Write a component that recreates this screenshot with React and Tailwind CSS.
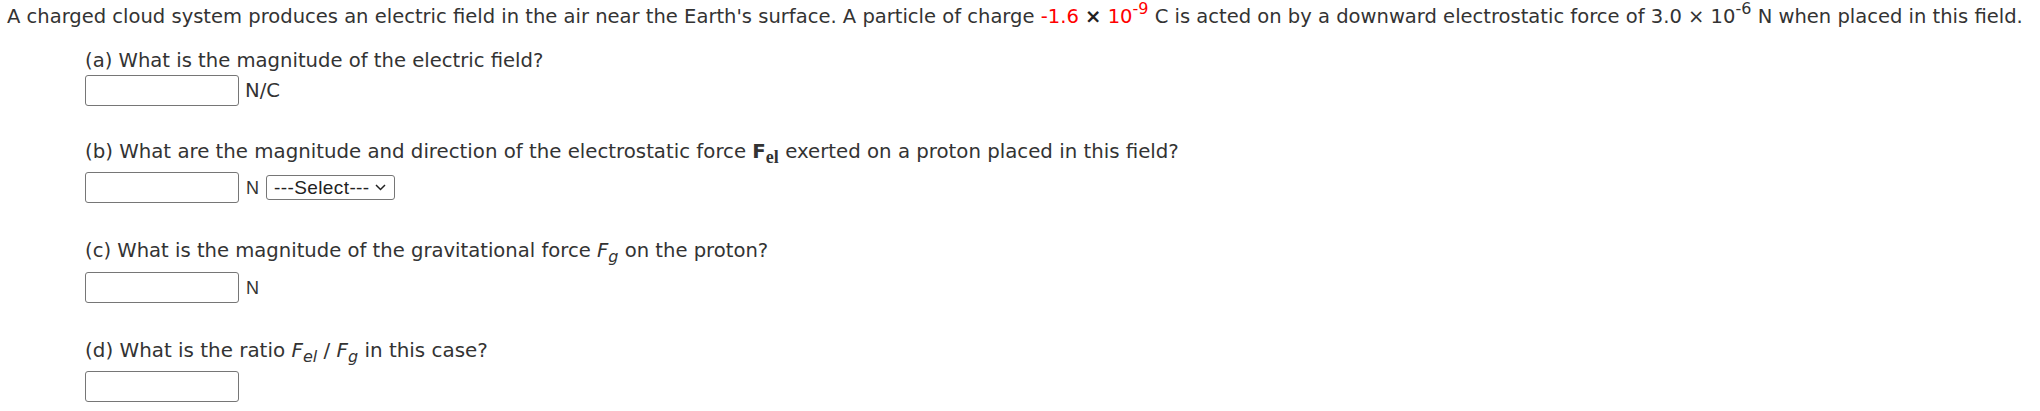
import React from "react";

// small raised / lowered text that does not grow the line box
const Sup = ({ children, className = "" }) => (
  <span className={`relative -top-[9px] text-[16px] leading-none ${className}`}>
    {children}
  </span>
);

const Sub = ({ children, className = "" }) => (
  <span className={`relative top-[5px] text-[16px] leading-none ${className}`}>
    {children}
  </span>
);

const AnswerBox = () => (
  <input
    type="text"
    className="h-[31px] w-[154px] rounded-[3px] border border-[#767676] bg-white px-1 text-[18px] outline-none"
  />
);

const DirectionSelect = () => (
  <div className="relative">
    <select
      defaultValue=""
      className="h-[25px] w-[129px] appearance-none rounded-[3px] border border-[#767676] bg-white pl-[7px] pr-6 font-['Liberation_Sans',Arial,sans-serif] text-[19px] leading-[21px] tracking-[0.4px] text-[#222]"
    >
      <option value="">---Select---</option>
      <option value="up">up</option>
      <option value="down">down</option>
    </select>
    <svg
      className="pointer-events-none absolute right-[9px] top-[9px]"
      width="11"
      height="7"
      viewBox="0 0 11 7"
      fill="none"
    >
      <path d="M1 1l4.5 4.5L10 1" stroke="#222" strokeWidth="1.5" />
    </svg>
  </div>
);

export default function App() {
  return (
    <div className="min-h-[411px] bg-white pl-[7px] pt-[5px] font-['DejaVu_Sans',Verdana,sans-serif] text-[19.6px] leading-[24px] text-[#333]">
      <p className="whitespace-nowrap text-[19.55px]">
        A charged cloud system produces an electric field in the air near the
        Earth's surface. A particle of charge{" "}
        <span className="text-[#ff0000]">-1.6</span>{" "}
        <span className="font-bold text-[#222]">×</span>{" "}
        <span className="text-[#ff0000]">
          10<Sup>-9</Sup>
        </span>{" "}
        C is acted on by a downward electrostatic force of 3.0 × 10
        <Sup>-6</Sup> N when placed in this field.
      </p>

      <div className="flex flex-col pl-[78px]">
        {/* (a) */}
        <p className="mt-[20px]">(a) What is the magnitude of the electric field?</p>
        <div className="mt-[2px] flex items-center gap-[6px]">
          <AnswerBox />
          <span>N/C</span>
        </div>

        {/* (b) */}
        <p className="mt-[34px] text-[19.75px]">
          (b) What are the magnitude and direction of the electrostatic force{" "}
          <span className="font-bold">F</span>
          <Sub className="font-['Liberation_Serif',serif] text-[18px] font-bold">el</Sub>{" "}
          exerted on a proton placed in this field?
        </p>
        <div className="mt-[8px] flex items-center gap-[7px]">
          <AnswerBox />
          <span className="font-['Liberation_Sans',Arial,sans-serif] text-[18px]">N</span>
          <DirectionSelect />
        </div>

        {/* (c) */}
        <p className="mt-[36px]">
          (c) What is the magnitude of the gravitational force{" "}
          <i>F</i>
          <Sub className="italic">g</Sub> on the proton?
        </p>
        <div className="mt-[9px] flex items-center gap-[7px]">
          <AnswerBox />
          <span className="font-['Liberation_Sans',Arial,sans-serif] text-[18px]">N</span>
        </div>

        {/* (d) */}
        <p className="mt-[36px] text-[19.9px]">
          (d) What is the ratio <i>F</i>
          <Sub className="italic">el</Sub> / <i>F</i>
          <Sub className="italic">g</Sub> in this case?
        </p>
        <div className="mt-[8px] flex items-center">
          <AnswerBox />
        </div>
      </div>
    </div>
  );
}
